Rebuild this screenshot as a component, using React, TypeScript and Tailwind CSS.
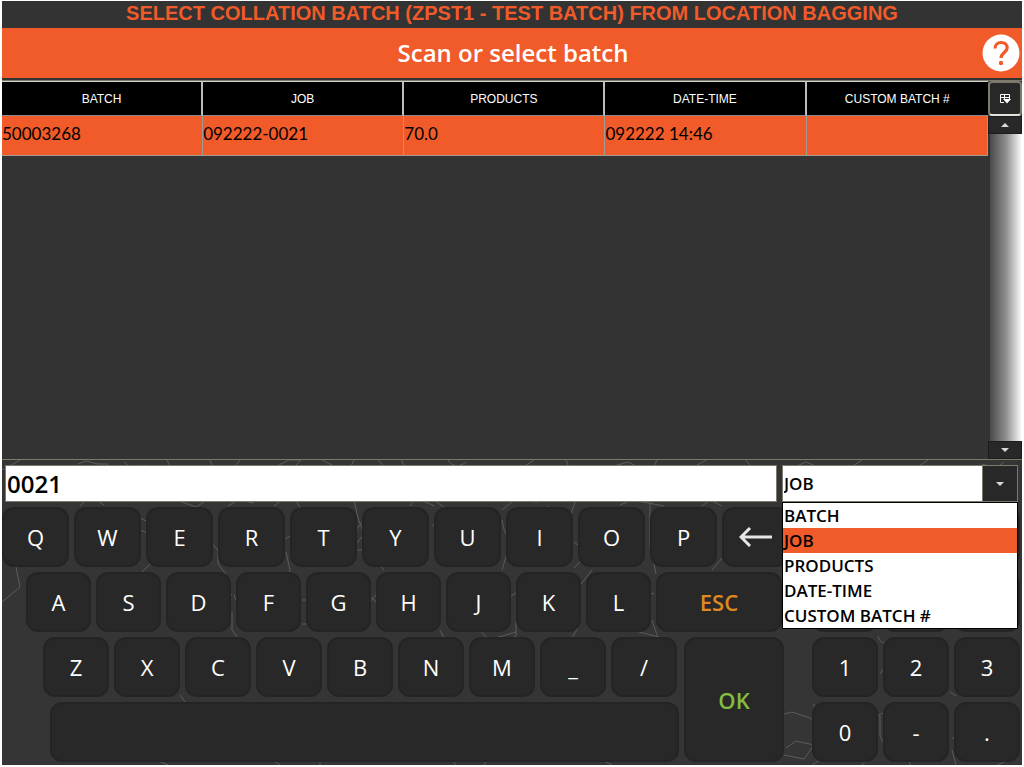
import { useState } from 'react';
import type { ReactNode } from 'react';
import clsx from 'clsx';

type Batch = {
    batch: string;
    job: string;
    products: string;
    dateTime: string;
    customBatch: string;
};

const COLUMNS = ['BATCH', 'JOB', 'PRODUCTS', 'DATE-TIME', 'CUSTOM BATCH #'];

const BATCHES: Batch[] = [
    { batch: '50003268', job: '092222-0021', products: '70.0', dateTime: '092222 14:46', customBatch: '' },
];

const TOP_ROW = ['Q', 'W', 'E', 'R', 'T', 'Y', 'U', 'I', 'O', 'P'];
const MIDDLE_ROW = ['A', 'S', 'D', 'F', 'G', 'H', 'J', 'K', 'L'];
const BOTTOM_ROW = ['Z', 'X', 'C', 'V', 'B', 'N', 'M', '_', '/'];
const NUMPAD = ['7', '8', '9', '4', '5', '6', '1', '2', '3', '0', '-', '.'];

// the open column list covers the first two numpad rows
const COVERED_KEYS = 6;

type KeyProps = {
    children?: ReactNode;
    label?: string;
    className?: string;
    onClick: () => void;
};

function Key({ children, label, className, onClick }: KeyProps) {
    return (
        <button
            type="button"
            aria-label={label}
            onClick={onClick}
            className={clsx(
                'flex min-w-0 items-center justify-center rounded-xl border-2 border-[#242424] bg-[#282828] text-[22px] leading-none active:bg-[#3a3a3a]',
                className
            )}
        >
            {children}
        </button>
    );
}

function BackArrow() {
    return (
        <svg className="h-5 w-[33px]" viewBox="0 0 33 20" fill="none" stroke="#e6e6e6" strokeWidth={3}>
            <path d="M11 1 2 10l9 9M2 10h31" />
        </svg>
    );
}

function Triangle({ up = false }: { up?: boolean }) {
    return (
        <svg className="h-1 w-2" viewBox="0 0 8 4" fill="#d8d8d8">
            <path d={up ? 'M4 0 8 4H0z' : 'M0 0h8L4 4z'} />
        </svg>
    );
}

function HelpIcon() {
    return (
        <svg className="size-[38px]" viewBox="0 0 38 38" fill="none">
            <circle cx="19" cy="19" r="18.5" fill="#fff" />
            <path
                d="M13 14.5c0-3.800 2.600-6 6.200-6s6 2.200 6 5.300c0 4.400-6.200 5-6.200 10.200"
                stroke="#f15a29"
                strokeWidth={3.200}
            />
            <circle cx="19" cy="29" r="2.200" fill="#f15a29" />
        </svg>
    );
}

function ColumnsIcon() {
    return (
        <svg className="h-[10px] w-[11px] shrink-0" viewBox="0 0 11 10" fill="none" stroke="#fff">
            <path d="M4 8.500H.5V.5h9V5M1 3.500h8M4.500 1v4" />
            <path d="M3 5h8L7 9.500z" fill="#fff" stroke="none" />
        </svg>
    );
}

// faint street-map lines behind the keyboard
function MapTexture() {
    return (
        <svg
            className="absolute inset-0 h-full w-full"
            viewBox="0 0 1020 305"
            preserveAspectRatio="none"
            fill="none"
            stroke="#5c5c5c"
            aria-hidden="true"
        >
            <path d="M0 142l18-15-4-20 M0 10l18-10 M68 128v-10l-14 12 M76 4l8-3 12 3h10l-6 8 M122 2l7 6 14-3 M78 46l6-6 14 2 4 3" />
            <path d="M138 70l10 4M138 58l8 4 M140 112l10-10V84 M165 0l4 8 M208 0l3 8 M238 0l-6 8 M275 6l12-6h12l-8 8 M320 0l12 6 M352 0l-4 8 M180 42l14 5 8-5 M226 46l10-6 16 3M272 46l8-6h14l4 8 M352 40l4 18 6 16-8 10" />
            <path d="M210 84l6 6v14l8 10 M282 80l6-4M284 92l4 18-4 14 M218 131l12 4 M232 135l2 5 M250 125c4 14 8 14 18 8l14-9 M354 70l8-10v30h-8 M346 118l6 16h14l14 14 M300 140h6v24h-6 M302 178l6 4 M230 152v18l6 8" />
            <path d="M372 100l10 10 M408 46c4-8 12-6 24 0 M432 40l14 10 M500 50l12-10 24 2 M545 46l10 12 14-4 4-12 M618 45l12-5 32 6 M430 66l12-8v18h-10 M500 60c2 12 4 16 8 16 M500 110l6-20 M572 82l8 6v12l-8 8 M648 40v44l6 30 M720 98l-10 12 M700 46l8-6 12 6" />
            <path d="M376 0l8 8 M400 0c0 6 6 8 16 8 M446 0c4 8 14 6 18 2 M520 8l12-8 M564 0l3 8 M612 6l14-4 12 6 M655 0l-4 8 M690 8l14-8 M744 0l6 8 M790 8l14-6 14 6 M860 0l-12 8 M914 8l12-8 M980 4l14 4 8-6" />
            <path d="M378 130l-10 12M430 124l6 14M478 122l2 14 M506 138l16-10 18 8 26 2 M590 110l-14 18 M638 130l14 4 M680 124l6 18 M438 170l6 12M506 180l8-4v-14 M578 164l-8 14v24 M650 160l6 18-8 10 M480 172c4 10 14 6 34 0 M630 170l30 8 M500 202l10 6" />
            <path d="M178 235l6 8 M146 254v8 M184 262l8-8 16 4 M154 300l12 5 M270 300l8 5 M318 298v7 M450 300l4 5 M486 298l-4 7 M600 300l10 5" />
            <path d="M782 254l8-2 18 6 8 6 M784 288l10-7 18 4-10 14-20-4 M812 244v10 M866 242l4 12 M876 256l18-12 24 6 4-8 M878 214l6-10 M876 176c2 8 6 6 12 8 M878 256v20l6 12 M930 248l4-6 M948 232l6 4 M970 242v8 M950 278h6 M950 290l4 15 M1000 178c4 4 8 2 12 6 M818 300l-8 5 M866 298l-6 7 M906 300l3 5 M1006 300l-10 5" />
        </svg>
    );
}

export default function App() {
    const [query, setQuery] = useState('0021');
    const [filter, setFilter] = useState('JOB');
    const [open, setOpen] = useState(true);

    const type = (char: string) => setQuery(value => value + char);

    const selectFilter = (column: string) => {
        setFilter(column);
        setOpen(false);
    };

    return (
        <div className="flex min-h-screen flex-col bg-white px-0.5 pt-px pb-0.5 font-['Open_Sans','Noto_Sans',sans-serif]">
            <main className="flex flex-1 flex-col bg-[#333333]">
                <h1 className="h-[27px] text-center font-['Liberation_Sans',Arial,sans-serif] text-xl leading-6 font-bold text-[#f15a29]">
                    SELECT COLLATION BATCH (ZPST1 - TEST BATCH) FROM LOCATION BAGGING
                </h1>

                <header className="flex h-[50px] items-center bg-[#f15a29] pr-0.5 pl-[42px] text-white">
                    <h2 className="flex-1 text-center text-2xl font-semibold">Scan or select batch</h2>
                    <button type="button" aria-label="Help">
                        <HelpIcon />
                    </button>
                </header>

                <section className="mt-0.5 flex flex-1 border-y border-[#7d7a6c]">
                    <div className="min-w-0 flex-1">
                        <table className="w-full table-fixed border-separate border-spacing-0">
                            <thead>
                                <tr>
                                    {COLUMNS.map((column, index) => (
                                        <th
                                            key={column}
                                            scope="col"
                                            className={clsx(
                                                "h-[35px] border-t border-b border-t-[#d4d4d4] border-b-[#8a8a8a] bg-black p-0 font-['Liberation_Sans',Arial,sans-serif] text-xs font-normal text-white",
                                                index < 4 && 'w-[20.4%] border-r-2 border-r-[#bdbdbd]'
                                            )}
                                        >
                                            {column}
                                        </th>
                                    ))}
                                </tr>
                            </thead>
                            <tbody>
                                {BATCHES.map(row => (
                                    <tr
                                        key={row.batch}
                                        aria-selected="true"
                                        className="bg-[#f15a29] font-['Lato','Open_Sans',sans-serif] text-[17px] leading-[35px] text-black"
                                    >
                                        {[row.batch, row.job, row.products, row.dateTime, row.customBatch].map(
                                            (value, index) => (
                                                <td
                                                    key={COLUMNS[index]}
                                                    className="h-10 border-r border-b border-[#a39a94] p-0 pb-1"
                                                >
                                                    {value}
                                                </td>
                                            )
                                        )}
                                    </tr>
                                ))}
                            </tbody>
                        </table>
                    </div>

                    <div className="flex w-[34px] flex-col">
                        <button
                            type="button"
                            aria-label="Choose columns"
                            className="flex h-[35px] items-center justify-center rounded-sm border-2 border-[#7d7a6c] border-b-[#e4e2da] bg-[#282828]"
                        >
                            <ColumnsIcon />
                        </button>
                        <button
                            type="button"
                            aria-label="Scroll up"
                            className="flex h-[18px] items-center justify-center border border-[#1c1c1c] bg-[#282828]"
                        >
                            <Triangle up />
                        </button>
                        <div className="ml-0.5 flex-1 bg-linear-to-r from-[#4a4a4a] via-[#8f8f8f] to-white" />
                        <button
                            type="button"
                            aria-label="Scroll down"
                            className="flex h-[18px] items-center justify-center border border-[#1c1c1c] bg-[#282828]"
                        >
                            <Triangle />
                        </button>
                    </div>
                </section>

                <section className="relative bg-[#353535] pt-[5px] pb-[3px]">
                    <MapTexture />

                    <div className="relative z-10 flex gap-[5px] pr-1 pl-[3px]">
                        <input
                            type="text"
                            aria-label="Search"
                            value={query}
                            onChange={e => setQuery(e.target.value)}
                            className="h-[37px] min-w-0 flex-1 border border-[#7d7a6c] bg-white px-px text-2xl font-semibold text-black outline-none"
                        />
                        <div className="relative w-[236px]">
                            <select
                                aria-label="Search column"
                                value={filter}
                                onChange={e => setFilter(e.target.value)}
                                onClick={() => setOpen(!open)}
                                className="h-[37px] w-full appearance-none border border-[#7d7a6c] bg-white px-px text-[17px] font-semibold text-black outline-none"
                            >
                                {COLUMNS.map(column => (
                                    <option key={column}>{column}</option>
                                ))}
                            </select>
                            <span className="pointer-events-none absolute inset-y-0 right-0 flex w-9 items-center justify-center border border-[#7d7a6c] bg-[#282828]">
                                <Triangle />
                            </span>
                            {open && (
                                <ul
                                    role="listbox"
                                    aria-label="Search column options"
                                    className="absolute inset-x-0 top-full border border-black bg-white"
                                >
                                    {COLUMNS.map(column => (
                                        <li
                                            key={column}
                                            role="option"
                                            aria-selected={column === filter}
                                            onClick={() => selectFilter(column)}
                                            className={clsx(
                                                'h-[25px] cursor-pointer px-px text-[17px] leading-[25px] font-semibold text-black',
                                                column === filter && 'bg-[#f15a29]'
                                            )}
                                        >
                                            {column}
                                        </li>
                                    ))}
                                </ul>
                            )}
                        </div>
                    </div>

                    <div className="relative mt-[5px] grid grid-cols-[787fr_208fr] gap-[23px] pr-0.5 text-white">
                        <div className="flex flex-col gap-[5px]">
                            <div className="grid h-[60px] grid-cols-11 gap-[5px]">
                                {TOP_ROW.map(char => (
                                    <Key key={char} onClick={() => type(char)}>
                                        {char}
                                    </Key>
                                ))}
                                <Key label="Backspace" onClick={() => setQuery(query.slice(0, -1))}>
                                    <BackArrow />
                                </Key>
                            </div>
                            <div className="grid h-[60px] grid-cols-[repeat(9,65fr)_126fr] gap-[5px] pr-[7px] pl-6">
                                {MIDDLE_ROW.map(char => (
                                    <Key key={char} onClick={() => type(char)}>
                                        {char}
                                    </Key>
                                ))}
                                <Key className="font-semibold text-[#de8a20]" onClick={() => setOpen(false)}>
                                    ESC
                                </Key>
                            </div>
                            <div className="grid h-[125px] grid-cols-[677fr_100fr] gap-[5px] pr-[5px]">
                                <div className="flex flex-col gap-[5px]">
                                    <div className="grid h-[60px] grid-cols-9 gap-[5px] pr-0.5 pl-[41px]">
                                        {BOTTOM_ROW.map(char => (
                                            <Key key={char} onClick={() => type(char)}>
                                                {char}
                                            </Key>
                                        ))}
                                    </div>
                                    <div className="flex h-[60px] pl-12">
                                        <Key label="Space" className="flex-1" onClick={() => type(' ')} />
                                    </div>
                                </div>
                                <Key className="font-semibold text-[#84bc3f]" onClick={() => setOpen(false)}>
                                    OK
                                </Key>
                            </div>
                        </div>

                        <div className="grid auto-rows-[60px] grid-cols-3 gap-[5px]">
                            {NUMPAD.map((char, index) => (
                                <Key key={char} label={char} onClick={() => type(char)}>
                                    {open && index < COVERED_KEYS ? null : char}
                                </Key>
                            ))}
                        </div>
                    </div>
                </section>
            </main>
        </div>
    );
}
